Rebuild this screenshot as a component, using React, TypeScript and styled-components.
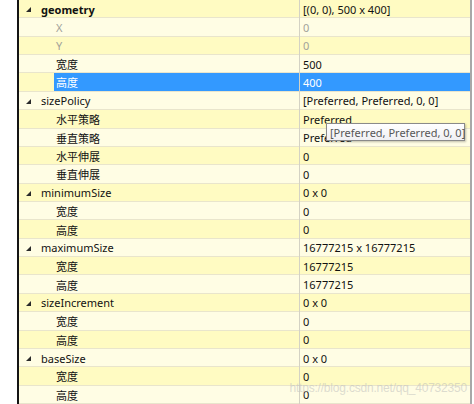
import React from 'react';
import styled, { createGlobalStyle, css } from 'styled-components';

type Prop = {
  name: string;
  value: string;
  group?: boolean;
  bold?: boolean;
  disabled?: boolean;
  selected?: boolean;
};

const rows: Prop[] = [
  { name: 'geometry', value: '[(0, 0), 500 x 400]', group: true, bold: true },
  { name: 'X', value: '0', disabled: true },
  { name: 'Y', value: '0', disabled: true },
  { name: '宽度', value: '500' },
  { name: '高度', value: '400', selected: true },
  { name: 'sizePolicy', value: '[Preferred, Preferred, 0, 0]', group: true },
  { name: '水平策略', value: 'Preferred' },
  { name: '垂直策略', value: 'Preferred' },
  { name: '水平伸展', value: '0' },
  { name: '垂直伸展', value: '0' },
  { name: 'minimumSize', value: '0 x 0', group: true },
  { name: '宽度', value: '0' },
  { name: '高度', value: '0' },
  { name: 'maximumSize', value: '16777215 x 16777215', group: true },
  { name: '宽度', value: '16777215' },
  { name: '高度', value: '16777215' },
  { name: 'sizeIncrement', value: '0 x 0', group: true },
  { name: '宽度', value: '0' },
  { name: '高度', value: '0' },
  { name: 'baseSize', value: '0 x 0', group: true },
  { name: '宽度', value: '0' },
  { name: '高度', value: '0' },
];

const GlobalStyle = createGlobalStyle`
  html, body { margin: 0; padding: 0; height: 100%; background: #ffffff; overflow: hidden; }
  #root { height: 100%; }
`;

const Page = styled.div`
  position: relative;
  display: flex;
  height: 404px;
  width: 474px;
  background: #ffffff;
  font-family: "Noto Sans", "Noto Sans CJK SC", sans-serif;
  font-size: 11px;
  color: #111111;
`;

const Gutter = styled.div`
  width: 17px;
  flex: none;
  background: #ffffff;
`;

const Frame = styled.div`
  flex: none;
  width: 451px;
  border-left: 2px solid #141414;
  border-right: 2px solid #a8a8a8;
  display: grid;
  grid-template-rows: repeat(22, 1fr);
`;

const Row = styled.div<{ $alt: boolean }>`
  display: grid;
  grid-template-columns: 281px 1fr;
  background: ${(p) => (p.$alt ? '#fffde4' : '#fffbc2')};
  box-shadow: inset 0 -1px 0 #e9e5cc;
  min-height: 0;
`;

const NameCell = styled.div<{ $group: boolean }>`
  display: flex;
  align-items: stretch;
  padding-left: ${(p) => (p.$group ? '7px' : '35px')};
  border-right: 1px solid #d4d2c4;
  min-width: 0;
`;

const Arrow = styled.svg`
  width: 5px;
  height: 5px;
  align-self: center;
  margin-right: 8px;
  margin-top: 1px;
  flex: none;
`;

const Label = styled.div<{ $bold?: boolean; $disabled?: boolean; $selected?: boolean }>`
  flex: 1;
  display: flex;
  align-items: center;
  padding-left: 2px;
  white-space: nowrap;
  font-weight: ${(p) => (p.$bold ? 700 : 400)};
  color: ${(p) => (p.$disabled ? '#a2a29a' : '#111111')};
  ${(p) =>
    p.$selected &&
    css`
      background: #3399ff;
      color: #ffffff;
      margin-bottom: 1px;
    `}
`;

const ValueCell = styled.div<{ $disabled?: boolean; $selected?: boolean }>`
  display: flex;
  align-items: center;
  padding-left: 3px;
  white-space: nowrap;
  overflow: hidden;
  color: ${(p) => (p.$disabled ? '#a2a29a' : '#111111')};
  ${(p) =>
    p.$selected &&
    css`
      background: #3399ff;
      color: #ffffff;
      margin-bottom: 1px;
    `}
`;

const Tooltip = styled.div`
  position: absolute;
  left: 326px;
  top: 123px;
  width: 134px;
  height: 16px;
  border: 1px solid #8a8a8a;
  background: linear-gradient(#ffffff, #f0f0f4);
  color: #575757;
  display: flex;
  align-items: center;
  padding-left: 3px;
  box-shadow: 1px 1px 2px rgba(0, 0, 0, 0.25);
  white-space: nowrap;
`;

const Watermark = styled.div`
  position: absolute;
  right: 7px;
  bottom: 9px;
  font-family: "Liberation Sans", Arial, sans-serif;
  font-size: 12px;
  letter-spacing: -0.2px;
  color: rgba(185, 185, 185, 0.5);
  white-space: nowrap;
  pointer-events: none;
`;

export default function App() {
  return (
    <>
      <GlobalStyle />
      <Page>
        <Gutter />
        <Frame>
          {rows.map((r, i) => (
            <Row key={i} $alt={i % 2 === 1}>
              <NameCell $group={!!r.group}>
                {r.group && (
                  <Arrow viewBox="0 0 5 5">
                    <polygon points="5,0 5,5 0,5" fill="#2a2a2a" />
                  </Arrow>
                )}
                <Label $bold={r.bold} $disabled={r.disabled} $selected={r.selected}>
                  {r.name}
                </Label>
              </NameCell>
              <ValueCell $disabled={r.disabled} $selected={r.selected}>
                {r.value}
              </ValueCell>
            </Row>
          ))}
        </Frame>
        <Tooltip>[Preferred, Preferred, 0, 0]</Tooltip>
        <Watermark>https://blog.csdn.net/qq_40732350</Watermark>
      </Page>
    </>
  );
}
